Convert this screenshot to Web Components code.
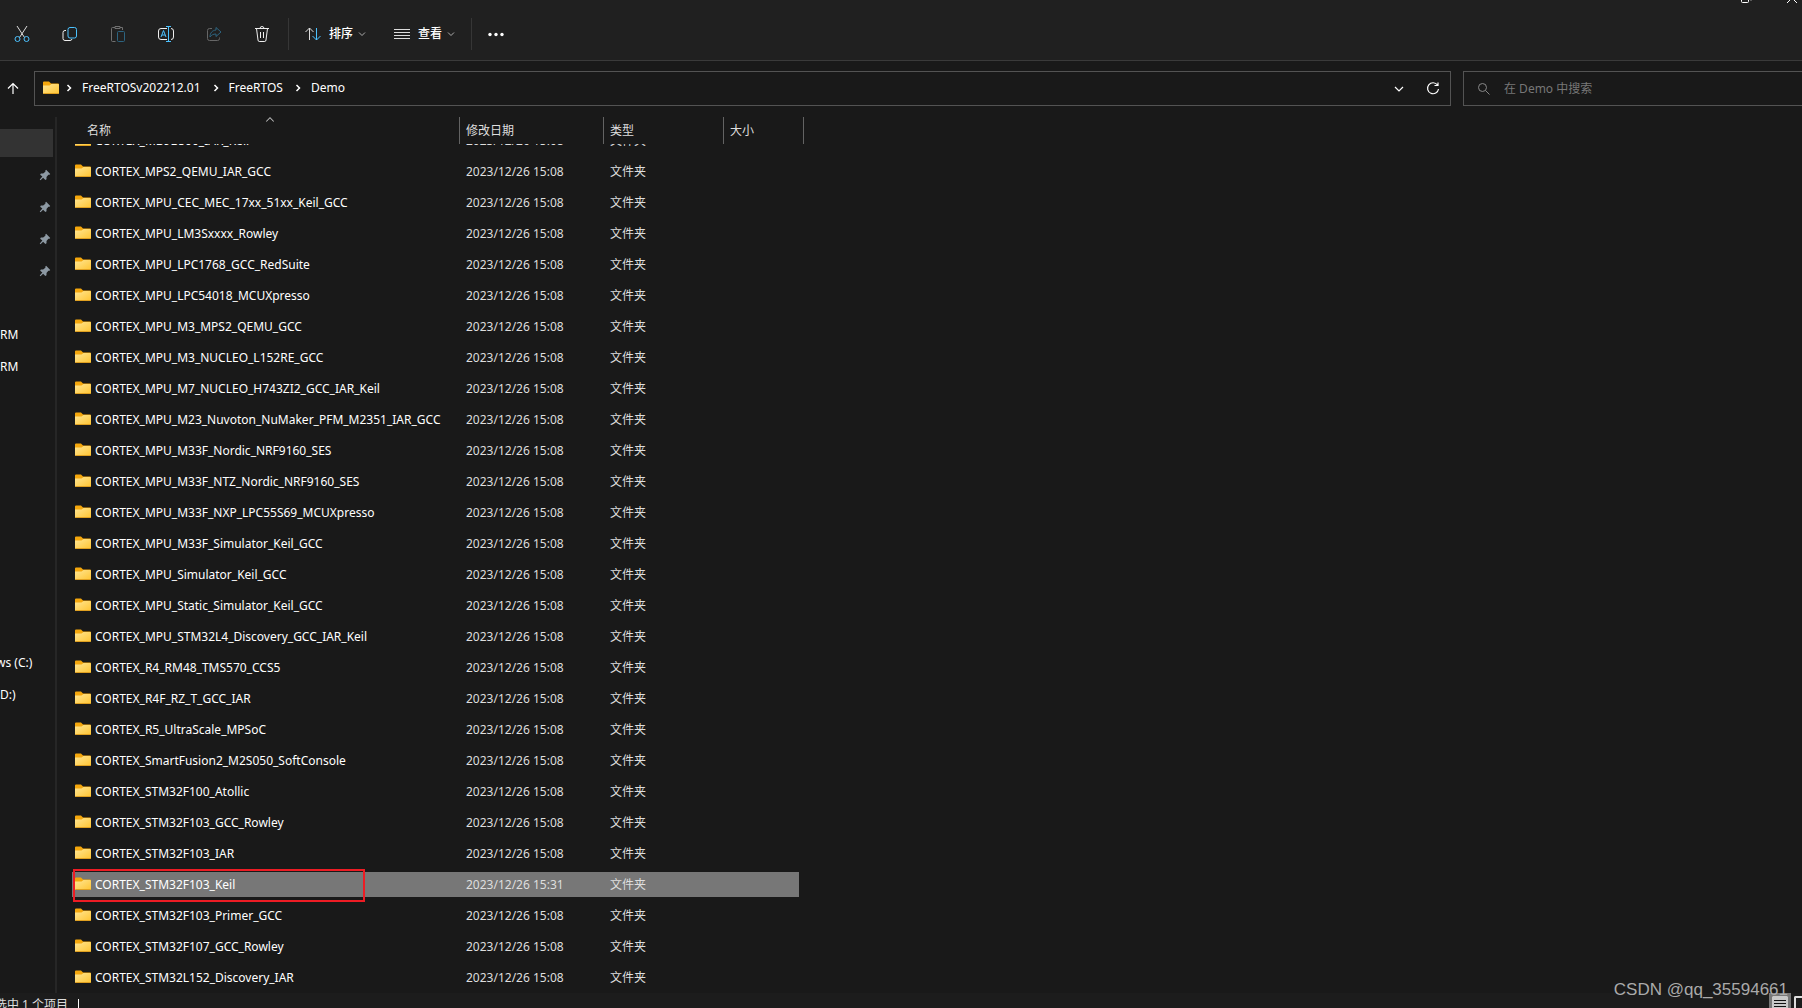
<!DOCTYPE html>
<html lang="zh-CN">
<head>
<meta charset="utf-8">
<title>Demo</title>
<style>
html, body{
    height: 100%;
    margin: 0;
    overflow: hidden;
    background: #191919;
}
body{
    font: 12px/16px "Noto Sans", "Noto Sans CJK SC", sans-serif;
    color: #fff;
}
</style>
</head>
<body>
<file-explorer></file-explorer>
<script>
const icons = {
    cut: `<path d="M3 0l7.500 11.500M13 0L5.500 11.500" stroke="#ddd"/><circle cx="3.500" cy="13" r="2.500" stroke="#4cc2ff"/><circle cx="12.500" cy="13" r="2.500" stroke="#4cc2ff"/>`,
    copy: `<path d="M4 4.500H3a2 2 0 0 0-2 2V12.500a2 2 0 0 0 2 2h5a2 2 0 0 0 2-1.500" stroke="#eee"/><rect x="6" y="1.500" width="8.500" height="10.500" rx="2" stroke="#4cc2ff"/>`,
    paste: `<path d="M5 1.500H2.500a1 1 0 0 0-1 1V14.500a1 1 0 0 0 1 1H5.500M10 1.500h2.500V4M5 .500h5v2H5z" stroke="#707070"/><rect x="7.500" y="5.500" width="7" height="10" rx="1" stroke="#2d6480"/>`,
    rename: `<path d="M9 2.500H3a2.500 2.500 0 0 0-2.500 2.500v6A2.500 2.500 0 0 0 3 13.500h6M13 2.500a2.500 2.500 0 0 1 2.500 2.500v6a2.500 2.500 0 0 1-2.500 2.500" stroke="#eee"/><path d="M3 11l2.500-6.500L8 11M4 9h3M10.500 .500v15M8 .500h5M8 15.500h5" stroke="#4cc2ff"/>`,
    share: `<path d="M6 2.500H3.500a2 2 0 0 0-2 2V12.500a2 2 0 0 0 2 2h8a2 2 0 0 0 2-2v-1" stroke="#666"/><path d="M10 1.500l5 4.500-5 4.500V8C7 8 5.500 9 4 11c0-4 2-6.500 6-7z" stroke="#2d6480"/>`,
    trash: `<path d="M1 2.500h14M2.500 2.500l1.500 11.500q.200 1.500 1.200 1.500h5.600q1 0 1.200-1.500l1.500-11.500M6 2.500a2 2 0 0 1 4 0M6.500 6v6M9.500 6v6" stroke="#eee"/>`,
    sort: `<path d="M4.500 14V2M.500 6l4-4 4 4" stroke="#ddd"/><path d="M11.500 2v12M7.500 10l4 4 4-4" stroke="#4cc2ff"/>`,
    view: `<path d="M0 3.500h16M0 6.500h16M0 9.500h16M0 12.500h16" stroke="#ddd"/>`,
    more: `<g fill="#fff"><circle cx="2" cy="8.500" r="1.700"/><circle cx="8" cy="8.500" r="1.700"/><circle cx="14" cy="8.500" r="1.700"/></g>`,
    down: `<path d="M4 6l4 4 4-4" stroke="currentColor" stroke-width="1.200"/>`,
    right: `<path d="M6.500 5l3 3-3 3" stroke="#fff" stroke-width="1.500"/>`,
    asc: `<path d="M3 10l5-5 5 5" stroke="#bbb" stroke-width="1.400"/>`,
    up: `<path d="M8 13V2.500M3 7.500l5-5 5 5" stroke="#fff" stroke-width="1.200"/>`,
    refresh: `<path d="M12.500 4A5.500 5.500 0 1 0 13.500 8M13 1.500V4.500H9.500" stroke="#fff" stroke-width="1.200"/>`,
    search: `<circle cx="6.500" cy="6.500" r="4" stroke="#888"/><path d="M9.500 9.500l4 4" stroke="#888"/>`,
    pin: `<path d="M9.500 1l5.500 5.500-1 1h-1.500l-2.500 3v3l-1.500 1-3-3L2 15l-1-1L4.500 10 1.500 7.500l1-1.500h3l3-2.500V2z" fill="#8d99a3"/>`,
    folder: `<g transform="translate(0 -1)"><path d="M0 2.500Q0 1.500 1 1.500H6L8 3.500H15Q16 3.500 16 4.500V8H0z" fill="#f5a70c"/><path d="M0 5.500H6.500L8.500 4H15Q16 4 16 5V13Q16 14 15 14H1Q0 14 0 13z" fill="url(#face)"/><path d="M.500 13.500H15.500" stroke="#e0a020"/></g><defs><linearGradient id="face" x2="1" y2="1"><stop stop-color="#ffe694"/><stop offset="1" stop-color="#ffc431"/></linearGradient></defs>`,
    restore: `<rect x="1.500" y="4.500" width="7" height="8" rx="1" stroke="#fff"/><path d="M4 2.500h5q2 0 2 2v6" stroke="#fff"/>`,
    close: `<path d="M3 3l10 10M13 3L3 13" stroke="#fff"/>`,
    details: `<rect width="16" height="16" rx="1" fill="#c8c8c8"/><path d="M2 4.500h12M2 7.500h12M2 10.500h12" stroke="#111"/>`
};

class ShadowElement extends HTMLElement{
    connectedCallback(){
        if(this.shadowRoot) return;
        this.attachShadow({mode: "open"});
        const template = document.createElement("template");
        template.innerHTML = this.getTemplate() + `<style>${this.getStyles()}</style>`;
        this.shadowRoot.appendChild(template.content.cloneNode(true));
    }
}

class UiIcon extends ShadowElement{
    getTemplate(){
        return `<svg viewBox="0 0 16 16" fill="none" aria-hidden="true">${icons[this.getAttribute("name")]}</svg>`;
    }
    getStyles(){
        return `
        :host{
            display: block;
            flex: none;
            width: 16px;
            height: 16px;
        }
        svg{
            display: block;
            width: 100%;
            height: 100%;
        }
        `;
    }
}
customElements.define("ui-icon", UiIcon);

class ToolButton extends ShadowElement{
    getTemplate(){
        const drop = this.hasAttribute("menu") ? `<ui-icon class="drop" name="down"></ui-icon>` : "";
        return `<button type="button" aria-label="${this.getAttribute("label")}"><ui-icon name="${this.getAttribute("icon")}"></ui-icon><slot></slot>${drop}</button>`;
    }
    getStyles(){
        return `
        :host{
            display: block;
        }
        button{
            display: flex;
            align-items: center;
            gap: 8px;
            height: 32px;
            padding: 0;
            border: 0;
            background: none;
            color: inherit;
            font: inherit;
        }
        .drop{
            width: 12px;
            height: 12px;
            margin-left: -5px;
            color: #bbb;
        }
        `;
    }
}
customElements.define("tool-button", ToolButton);

class CommandBar extends ShadowElement{
    getTemplate(){
        return `
        <div class="window">
            <ui-icon name="restore"></ui-icon>
            <ui-icon name="close"></ui-icon>
        </div>
        <div class="group edit">
            <tool-button icon="cut" label="剪切"></tool-button>
            <tool-button icon="copy" label="复制"></tool-button>
            <tool-button icon="paste" label="粘贴"></tool-button>
            <tool-button icon="rename" label="重命名"></tool-button>
            <tool-button icon="share" label="共享"></tool-button>
            <tool-button icon="trash" label="删除"></tool-button>
        </div>
        <div class="group">
            <tool-button icon="sort" label="排序" menu>排序</tool-button>
            <tool-button icon="view" label="查看" menu>查看</tool-button>
        </div>
        <div class="group">
            <tool-button icon="more" label="更多"></tool-button>
        </div>
        `;
    }
    getStyles(){
        return `
        :host{
            position: relative;
            display: flex;
            align-items: center;
            height: 61px;
            padding-top: 8px;
            box-sizing: border-box;
            background: #202020;
            border-bottom: 1px solid #3a3a3a;
            font-weight: 500;
        }
        .group{
            display: flex;
            align-items: center;
            height: 32px;
            padding: 0 16px;
        }
        .group + .group{
            border-left: 1px solid #363636;
        }
        .edit{
            gap: 32px;
            padding: 0 18px 0 14px;
        }
        .edit + .group{
            gap: 26px;
            padding-right: 14px;
        }
        .window{
            position: absolute;
            top: -10px;
            right: 2px;
            display: flex;
            gap: 28px;
        }
        `;
    }
}
customElements.define("command-bar", CommandBar);

class AddressBar extends ShadowElement{
    getTemplate(){
        const crumbs = this.getAttribute("path").split("/").map(name => `
            <li><ui-icon name="right"></ui-icon><a href="#">${name}</a></li>`).join("");
        return `
        <button type="button" aria-label="向上"><ui-icon name="up"></ui-icon></button>
        <nav class="box">
            <ui-icon name="folder"></ui-icon>
            <ol>${crumbs}</ol>
            <button type="button" aria-label="历史记录"><ui-icon name="down"></ui-icon></button>
            <button type="button" aria-label="刷新"><ui-icon name="refresh"></ui-icon></button>
        </nav>
        <label class="box search">
            <ui-icon name="search"></ui-icon>
            <input type="search" placeholder="在 Demo 中搜索" aria-label="搜索">
        </label>
        `;
    }
    getStyles(){
        return `
        :host{
            display: flex;
            align-items: center;
            gap: 12px;
            padding: 10px 0 11px 5px;
        }
        button{
            padding: 0;
            border: 0;
            background: none;
            color: inherit;
        }
        .box{
            display: flex;
            align-items: center;
            box-sizing: border-box;
            height: 35px;
            border: 1px solid #535353;
        }
        nav{
            flex: 1;
            gap: 18px;
            padding: 0 9px 0 8px;
            margin-left: 1px;
        }
        ol{
            display: flex;
            flex: 1;
            gap: 7px;
            margin: 0 0 0 -16px;
            padding: 0 0 2px;
            list-style: none;
        }
        li{
            display: flex;
            align-items: center;
            gap: 5px;
        }
        a{
            color: inherit;
            text-decoration: none;
        }
        .search{
            flex: none;
            width: 339px;
            padding-left: 12px;
            gap: 12px;
            border-right: 0;
        }
        input{
            flex: 1;
            min-width: 0;
            padding: 0;
            border: 0;
            outline: 0;
            background: none;
            color: inherit;
            font: inherit;
        }
        input::placeholder{
            color: #777;
        }
        `;
    }
}
customElements.define("address-bar", AddressBar);

class SideItem extends ShadowElement{
    getTemplate(){
        const pin = this.hasAttribute("pinned") ? `<ui-icon name="pin"></ui-icon>` : "";
        return `<slot></slot>${pin}`;
    }
    getStyles(){
        return `
        :host{
            display: flex;
            align-items: center;
            height: 32px;
            white-space: nowrap;
        }
        :host([selected]){
            height: 28px;
            margin: 2px 0;
            background: #333;
        }
        ui-icon{
            width: 12px;
            height: 12px;
            margin-left: auto;
            margin-right: 2px;
        }
        `;
    }
}
customElements.define("side-item", SideItem);

class SideBar extends ShadowElement{
    getTemplate(){
        return `<slot></slot>`;
    }
    getStyles(){
        return `
        :host{
            display: block;
            flex: none;
            box-sizing: border-box;
            width: 57px;
            padding: 10px 2px 0 0;
            overflow: hidden;
            border-right: 2px solid #262626;
        }
        `;
    }
}
customElements.define("side-bar", SideBar);

class FileList extends ShadowElement{
    getTemplate(){
        const rows = this.getAttribute("files").split(" ").map(file => {
            const selected = file == this.getAttribute("selected");
            return `
            <tr${selected ? ` class="selected" aria-selected="true"` : ""}>
                <td><div class="name"><ui-icon name="folder"></ui-icon>${file}</div></td>
                <td>2023/12/26 ${selected ? "15:31" : "15:08"}</td>
                <td>文件夹</td>
                <td></td>
            </tr>`;
        }).join("");
        return `
        <table>
            <thead>
                <tr>
                    <th>名称<ui-icon name="asc"></ui-icon></th>
                    <th>修改日期</th>
                    <th>类型</th>
                    <th>大小</th>
                </tr>
            </thead>
            <tbody>${rows}</tbody>
        </table>
        `;
    }
    getStyles(){
        return `
        :host{
            display: block;
            flex: 1;
            overflow: auto;
            scrollbar-width: none;
            padding-left: 15px;
        }
        table{
            table-layout: fixed;
            width: 732px;
            border-spacing: 0;
        }
        th{
            position: sticky;
            top: 0;
            z-index: 1;
            box-sizing: border-box;
            height: 27px;
            padding: 0 6px;
            background: #191919;
            border-right: 1px solid #636363;
            color: #dedede;
            font-weight: 400;
            text-align: left;
        }
        th:nth-child(1){ width: 388px; padding-left: 15px; }
        th:nth-child(2){ width: 144px; }
        th:nth-child(3){ width: 120px; }
        th:nth-child(4){ width: 80px; }
        th ui-icon{
            position: absolute;
            top: -3px;
            left: 50%;
            width: 12px;
            height: 12px;
            margin-left: -2px;
        }
        td{
            height: 31px;
            padding: 0 6px;
            color: #dedede;
            white-space: nowrap;
        }
        td:first-child{
            position: relative;
            padding: 0 0 0 3px;
            color: #fff;
        }
        .name{
            display: flex;
            align-items: center;
            gap: 4px;
        }
        .selected td{
            background: linear-gradient(#777, #777) 0 3px / 100% 25px no-repeat;
        }
        .selected td:last-child{
            background-size: 75px 25px;
        }
        .selected td:first-child::after{
            content: "";
            position: absolute;
            top: 0;
            left: 1px;
            width: 288px;
            height: 29px;
            border: 2px solid #ed1c24;
        }
        `;
    }
    connectedCallback(){
        super.connectedCallback();
        this.scrollTop = this.scrollHeight;
    }
}
customElements.define("file-list", FileList);

class StatusBar extends ShadowElement{
    getTemplate(){
        return `
        <span class="count"><slot></slot></span>
        <div class="modes">
            <button type="button" class="on" aria-label="详细信息"><ui-icon name="details"></ui-icon></button>
            <button type="button" aria-label="大图标"></button>
        </div>
        `;
    }
    getStyles(){
        return `
        :host{
            display: flex;
            align-items: flex-start;
            flex: none;
            height: 15px;
            background: #1c1c1c;
            color: #dedede;
        }
        .count{
            margin: 4px 0 0 -5px;
            padding-right: 11px;
            background: linear-gradient(#fff, #fff) right 2px / 1px 16px no-repeat;
            white-space: nowrap;
        }
        .modes{
            display: flex;
            align-items: flex-start;
            gap: 3px;
            margin-left: auto;
        }
        button{
            box-sizing: border-box;
            width: 8px;
            height: 22px;
            margin-top: 3px;
            padding: 0;
            border: 2px solid #ddd;
            border-right: 0;
            border-radius: 2px 0 0 0;
            background: #1c1c1c;
        }
        .on{
            width: 22px;
            margin-top: 0;
            border: 3px solid #777;
            border-radius: 0;
        }
        `;
    }
}
customElements.define("status-bar", StatusBar);

class FileExplorer extends ShadowElement{
    getTemplate(){
        const files = `CORTEX_MB9B500_IAR_Keil CORTEX_MPS2_QEMU_IAR_GCC CORTEX_MPU_CEC_MEC_17xx_51xx_Keil_GCC CORTEX_MPU_LM3Sxxxx_Rowley CORTEX_MPU_LPC1768_GCC_RedSuite CORTEX_MPU_LPC54018_MCUXpresso CORTEX_MPU_M3_MPS2_QEMU_GCC CORTEX_MPU_M3_NUCLEO_L152RE_GCC CORTEX_MPU_M7_NUCLEO_H743ZI2_GCC_IAR_Keil CORTEX_MPU_M23_Nuvoton_NuMaker_PFM_M2351_IAR_GCC CORTEX_MPU_M33F_Nordic_NRF9160_SES CORTEX_MPU_M33F_NTZ_Nordic_NRF9160_SES CORTEX_MPU_M33F_NXP_LPC55S69_MCUXpresso CORTEX_MPU_M33F_Simulator_Keil_GCC CORTEX_MPU_Simulator_Keil_GCC CORTEX_MPU_Static_Simulator_Keil_GCC CORTEX_MPU_STM32L4_Discovery_GCC_IAR_Keil CORTEX_R4_RM48_TMS570_CCS5 CORTEX_R4F_RZ_T_GCC_IAR CORTEX_R5_UltraScale_MPSoC CORTEX_SmartFusion2_M2S050_SoftConsole CORTEX_STM32F100_Atollic CORTEX_STM32F103_GCC_Rowley CORTEX_STM32F103_IAR CORTEX_STM32F103_Keil CORTEX_STM32F103_Primer_GCC CORTEX_STM32F107_GCC_Rowley CORTEX_STM32L152_Discovery_IAR`;
        return `
        <command-bar></command-bar>
        <address-bar path="FreeRTOSv202212.01/FreeRTOS/Demo"></address-bar>
        <main>
            <side-bar>
                <side-item selected></side-item>
                <side-item pinned></side-item>
                <side-item pinned></side-item>
                <side-item pinned></side-item>
                <side-item pinned></side-item>
                <side-item></side-item>
                <side-item>RM</side-item>
                <side-item>RM</side-item>
                <side-item class="drives">ws (C:)</side-item>
                <side-item>D:)</side-item>
            </side-bar>
            <file-list files="${files}" selected="CORTEX_STM32F103_Keil"></file-list>
        </main>
        <status-bar>选中 1 个项目</status-bar>
        <div class="mark">CSDN @qq_35594661</div>
        `;
    }
    getStyles(){
        return `
        :host{
            position: relative;
            display: flex;
            flex-direction: column;
            height: 100vh;
            overflow: hidden;
        }
        main{
            display: flex;
            flex: 1;
            min-height: 0;
        }
        .drives{
            margin-top: 264px;
            margin-left: -4px;
        }
        .mark{
            position: absolute;
            right: 14px;
            bottom: 8px;
            color: #aaa;
            font: 17px/20px "Liberation Sans", sans-serif;
        }
        `;
    }
}
customElements.define("file-explorer", FileExplorer);
</script>
</body>
</html>
